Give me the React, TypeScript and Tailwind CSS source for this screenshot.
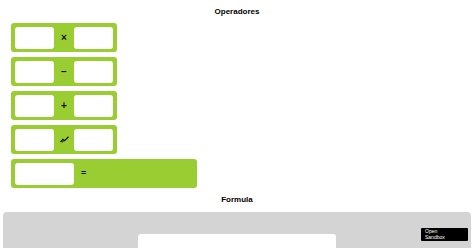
import React from "react";

const Row = ({ sym }: { sym: React.ReactNode }) => (
  <div className="flex items-center w-[106px] h-[29px] bg-[#9acd32] rounded-[3px] px-[4px]">
    <div className="w-[39px] h-[22px] bg-white rounded-[3px]" />
    <div className="w-[20px] flex items-center justify-center leading-none text-[#111]">{sym}</div>
    <div className="w-[39px] h-[22px] bg-white rounded-[3px]" />
  </div>
);

export default function App() {
  return (
    <div className="w-[474px] h-[248px] overflow-hidden bg-white font-['Liberation_Sans',Arial,sans-serif]">
      <div className="h-[23px] flex items-center justify-center text-[8px] font-bold text-black pt-[1px]">Operadores</div>
      <div className="flex flex-col gap-[5px] pl-[11px]">
        <Row sym={<span className="text-[10px] font-bold">×</span>} />
        <Row sym={<span className="text-[10px] font-bold">−</span>} />
        <Row sym={<span className="text-[10px] font-bold">+</span>} />
        <Row
          sym={
            <svg width="9" height="7" viewBox="0 0 9 7">
              <polyline points="0.5,6.2 3,3.3 4.6,4.6 8.5,0.8" fill="none" stroke="#111" strokeWidth="1.2" />
              <polyline points="1.8,6.5 4.2,4.4" fill="none" stroke="#111" strokeWidth="0.9" />
            </svg>
          }
        />
        <div className="flex items-center w-[186px] h-[29px] bg-[#9acd32] rounded-[3px] px-[4px]">
          <div className="w-[59px] h-[22px] bg-white rounded-[3px]" />
          <div className="ml-[7px] text-[9px] font-bold leading-none text-[#111]">=</div>
        </div>
      </div>
      <div className="h-[24px] flex items-center justify-center text-[8px] font-bold text-black">Formula</div>
      <div className="mx-[3px] h-[40px] bg-[#d4d4d4] rounded-t-[4px] flex flex-col">
        <div className="flex justify-end pt-[16px] pr-[3px]">
          <div className="w-[47px] h-[13px] bg-black rounded-[1px] text-white text-[5px] leading-[5.5px] px-[4px] pt-[1px]">
            Open<br />Sandbox
          </div>
        </div>
        <div className="ml-[135px] -mt-[7px] w-[198px] h-[20px] bg-white rounded-t-[3px]" />
      </div>
    </div>
  );
}
